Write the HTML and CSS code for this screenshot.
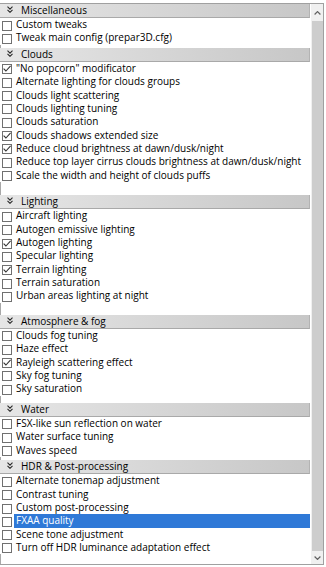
FILE: index.html
```html
<!DOCTYPE html>
<html>
<head>
<meta charset="utf-8">
<link rel="stylesheet" href="styles.css">
</head>
<body>
<div class="frame">
  <div class="list">
    <div class="section sec-misc">
      <div class="header"><svg class="chev" width="6" height="7" viewBox="0 0 6 7"><polyline points="0.5,0.7 3,3.2 5.5,0.7"/><polyline points="0.5,3.8 3,6.3 5.5,3.8"/></svg><span class="title">Miscellaneous</span></div>
      <div class="row"><span class="box"></span><span class="label">Custom tweaks</span></div>
      <div class="row"><span class="box"></span><span class="label">Tweak main config (prepar3D.cfg)</span></div>
    </div>
    <div class="section sec-clouds">
      <div class="header"><svg class="chev" width="6" height="7" viewBox="0 0 6 7"><polyline points="0.5,0.7 3,3.2 5.5,0.7"/><polyline points="0.5,3.8 3,6.3 5.5,3.8"/></svg><span class="title">Clouds</span></div>
      <div class="row"><span class="box"><svg class="tick" width="8" height="8" viewBox="0 0 8 8"><polyline points="0.6,3.6 2.9,6 7.6,0.8"/></svg></span><span class="label">"No popcorn" modificator</span></div>
      <div class="row"><span class="box"></span><span class="label">Alternate lighting for clouds groups</span></div>
      <div class="row"><span class="box"></span><span class="label">Clouds light scattering</span></div>
      <div class="row"><span class="box"></span><span class="label">Clouds lighting tuning</span></div>
      <div class="row"><span class="box"></span><span class="label">Clouds saturation</span></div>
      <div class="row"><span class="box"><svg class="tick" width="8" height="8" viewBox="0 0 8 8"><polyline points="0.6,3.6 2.9,6 7.6,0.8"/></svg></span><span class="label">Clouds shadows extended size</span></div>
      <div class="row"><span class="box"><svg class="tick" width="8" height="8" viewBox="0 0 8 8"><polyline points="0.6,3.6 2.9,6 7.6,0.8"/></svg></span><span class="label">Reduce cloud brightness at dawn/dusk/night</span></div>
      <div class="row"><span class="box"></span><span class="label">Reduce top layer cirrus clouds brightness at dawn/dusk/night</span></div>
      <div class="row"><span class="box"></span><span class="label">Scale the width and height of clouds puffs</span></div>
    </div>
    <div class="section sec-lighting">
      <div class="header"><svg class="chev" width="6" height="7" viewBox="0 0 6 7"><polyline points="0.5,0.7 3,3.2 5.5,0.7"/><polyline points="0.5,3.8 3,6.3 5.5,3.8"/></svg><span class="title">Lighting</span></div>
      <div class="row"><span class="box"></span><span class="label">Aircraft lighting</span></div>
      <div class="row"><span class="box"></span><span class="label">Autogen emissive lighting</span></div>
      <div class="row"><span class="box"><svg class="tick" width="8" height="8" viewBox="0 0 8 8"><polyline points="0.6,3.6 2.9,6 7.6,0.8"/></svg></span><span class="label">Autogen lighting</span></div>
      <div class="row"><span class="box"></span><span class="label">Specular lighting</span></div>
      <div class="row"><span class="box"><svg class="tick" width="8" height="8" viewBox="0 0 8 8"><polyline points="0.6,3.6 2.9,6 7.6,0.8"/></svg></span><span class="label">Terrain lighting</span></div>
      <div class="row"><span class="box"></span><span class="label">Terrain saturation</span></div>
      <div class="row"><span class="box"></span><span class="label">Urban areas lighting at night</span></div>
    </div>
    <div class="section sec-atmo">
      <div class="header"><svg class="chev" width="6" height="7" viewBox="0 0 6 7"><polyline points="0.5,0.7 3,3.2 5.5,0.7"/><polyline points="0.5,3.8 3,6.3 5.5,3.8"/></svg><span class="title">Atmosphere &amp; fog</span></div>
      <div class="row"><span class="box"></span><span class="label">Clouds fog tuning</span></div>
      <div class="row"><span class="box"></span><span class="label">Haze effect</span></div>
      <div class="row"><span class="box"><svg class="tick" width="8" height="8" viewBox="0 0 8 8"><polyline points="0.6,3.6 2.9,6 7.6,0.8"/></svg></span><span class="label">Rayleigh scattering effect</span></div>
      <div class="row"><span class="box"></span><span class="label">Sky fog tuning</span></div>
      <div class="row"><span class="box"></span><span class="label">Sky saturation</span></div>
    </div>
    <div class="section sec-water">
      <div class="header"><svg class="chev" width="6" height="7" viewBox="0 0 6 7"><polyline points="0.5,0.7 3,3.2 5.5,0.7"/><polyline points="0.5,3.8 3,6.3 5.5,3.8"/></svg><span class="title">Water</span></div>
      <div class="row"><span class="box"></span><span class="label">FSX-like sun reflection on water</span></div>
      <div class="row"><span class="box"></span><span class="label">Water surface tuning</span></div>
      <div class="row"><span class="box"></span><span class="label">Waves speed</span></div>
    </div>
    <div class="section sec-hdr">
      <div class="header"><svg class="chev" width="6" height="7" viewBox="0 0 6 7"><polyline points="0.5,0.7 3,3.2 5.5,0.7"/><polyline points="0.5,3.8 3,6.3 5.5,3.8"/></svg><span class="title">HDR &amp; Post-processing</span></div>
      <div class="row"><span class="box"></span><span class="label">Alternate tonemap adjustment</span></div>
      <div class="row"><span class="box"></span><span class="label">Contrast tuning</span></div>
      <div class="row"><span class="box"></span><span class="label">Custom post-processing</span></div>
      <div class="row selected"><span class="box"></span><span class="label">FXAA quality</span></div>
      <div class="row"><span class="box"></span><span class="label">Scene tone adjustment</span></div>
      <div class="row"><span class="box"></span><span class="label">Turn off HDR luminance adaptation effect</span></div>
    </div>
  </div>
  <div class="scroll">
    <div class="sb-btn sb-up"><svg width="7" height="4" viewBox="0 0 7 4"><polyline points="0.6,3.5 3.5,0.6 6.4,3.5"/></svg></div>
    <div class="sb-thumb"></div>
    <div class="sb-btn sb-down"><svg width="7" height="4" viewBox="0 0 7 4"><polyline points="0.6,0.5 3.5,3.4 6.4,0.5"/></svg></div>
  </div>
</div>
</body>
</html>
```

FILE: styles.css
```css
* { box-sizing: border-box; }
html, body { margin: 0; padding: 0; background: #fff; }
body {
  width: 326px;
  height: 567px;
  overflow: hidden;
  font-family: "Open Sans", "Segoe UI", sans-serif;
  font-size: 10px;
  color: #000;
}
.frame {
  margin-top: 3px;
  width: 324px;
  height: 562px;
  border-top: 1px solid #a0a0a0;
  border-bottom: 1px solid #a0a0a0;
  border-right: 1px solid #a0a0a0;
  display: flex;
}
.list {
  width: 311px;
  background: linear-gradient(#a8a8a8, #a8a8a8) 0 0 / 1px 100% no-repeat, #fff;
}
.sec-misc { margin-bottom: 3.33px; }
.sec-clouds { margin-bottom: 13.5px; }
.sec-lighting { margin-bottom: 12.17px; }
.sec-atmo { margin-bottom: 7.33px; }
.sec-water { margin-bottom: 3.5px; }
.header {
  height: 14px;
  margin-right: 1px;
  display: flex;
  align-items: center;
  padding: 0 0 1px 7px;
  background: linear-gradient(to right, #e6e6e6, #c7c7c7);
  border-bottom: 1px solid #a9a9a9;
  border-right: 1px solid #b3b3b3;
}
.chev {
  flex: none;
  margin-right: 8px;
  margin-bottom: 1px;
  fill: none;
  stroke: #2a2a2a;
  stroke-width: 1.1;
}
.title {
  line-height: 12px;
  white-space: nowrap;
}
.row {
  height: calc(40px / 3);
  margin-right: 1px;
  display: flex;
  align-items: flex-start;
  background: #fff;
}
.box {
  flex: none;
  width: 10px;
  height: 10px;
  margin: 2.5px 0 0 2px;
  border: 1px solid #707070;
  background: #fff;
  display: flex;
  align-items: center;
  justify-content: center;
}
.tick {
  fill: none;
  stroke: #333;
  stroke-width: 1.1;
}
.label {
  flex: 1;
  height: 100%;
  margin-left: 2px;
  padding-left: 2px;
  line-height: calc(40px / 3);
  white-space: nowrap;
}
.row.selected .label {
  background: #2f79d7;
  color: #fff;
}
.scroll {
  width: 12px;
  background: #f0f0f0;
  display: flex;
  flex-direction: column;
}
.sb-btn {
  display: flex;
  align-items: center;
  justify-content: center;
}
.sb-btn svg {
  fill: none;
  stroke: #606060;
  stroke-width: 1.2;
}
.sb-up { height: 17px; }
.sb-down { height: 13px; }
.sb-thumb {
  flex: 1;
  margin-left: 1px;
  background: #cdcdcd;
}
```
